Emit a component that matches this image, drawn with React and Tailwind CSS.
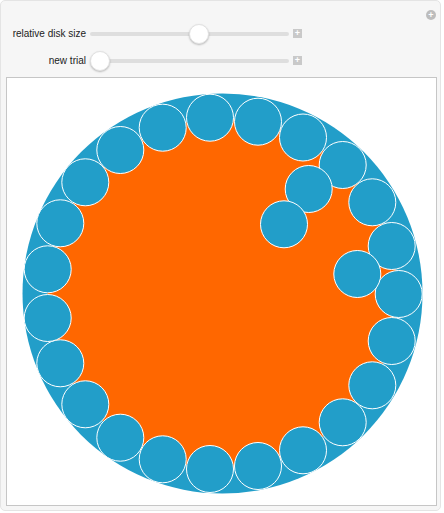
import React from 'react';

const rim = [
  [210, 117.7], [258, 121.7], [303, 137.5], [342.7, 165], [372.3, 202.3], [391.7, 246],
  [398.7, 294], [391.7, 341], [372.3, 385.3], [342.7, 422.3], [303, 450.3], [258, 466],
  [210, 469], [162.7, 459.3], [120.3, 437.7], [85.3, 404.3], [60.3, 363.3], [47.7, 318],
  [47.7, 269.3], [60.3, 223.3], [85.3, 182.3], [120.3, 150], [162.7, 127.7],
];

const inner = [[308.7, 189], [284, 224.3], [357.3, 274]];

function Slider({ label, pos }) {
  return (
    <div className="flex items-center h-[27px]">
      <div className="w-[85px] text-right text-[10px] text-[#222]">{label}</div>
      <div className="relative ml-[4px] w-[199px] h-[4px] rounded-full bg-[#dedede]">
        <div
          className="absolute top-1/2 w-[20px] h-[20px] -mt-[10px] -ml-[10px] rounded-full bg-white border border-[#e2e2e2] shadow-[0_1px_2px_rgba(0,0,0,0.25)]"
          style={{ left: pos }}
        />
      </div>
      <div className="ml-[4px] w-[9px] h-[9px] bg-[#c9c9c9] flex items-center justify-center text-white text-[9px] leading-none font-bold">+</div>
    </div>
  );
}

export default function App() {
  return (
    <div className="w-[444px] h-[513px] bg-white" style={{ fontFamily: '"Liberation Sans", Arial, sans-serif' }}>
      <div className="w-[441px] h-[511px] border border-[#e4e4e4] rounded-[5px] bg-[#f6f6f6] flex flex-col">
        <div className="h-[19px] flex justify-end items-end pr-[4px]">
          <div className="w-[10px] h-[10px] rounded-full bg-[#bdbdbd] flex items-center justify-center text-white text-[9px] leading-none font-bold">+</div>
        </div>
        <div className="flex flex-col">
          <Slider label="relative disk size" pos={109} />
          <Slider label="new trial" pos={10} />
        </div>
        <div className="mt-[3px] ml-[5px] w-[431px] h-[429px] border border-[#c6c6c6] bg-white">
          <svg width="429" height="427" viewBox="7 78 429 427" className="block">
            <circle cx="222.5" cy="293.5" r="200" fill="#229ec9" />
            <circle cx="222.5" cy="293.5" r="175" fill="#ff6700" />
            {rim.concat(inner).map(([x, y], i) => (
              <circle key={i} cx={x} cy={y} r="23.5" fill="#229ec9" stroke="#ffffff" strokeWidth="1" />
            ))}
          </svg>
        </div>
      </div>
    </div>
  );
}
